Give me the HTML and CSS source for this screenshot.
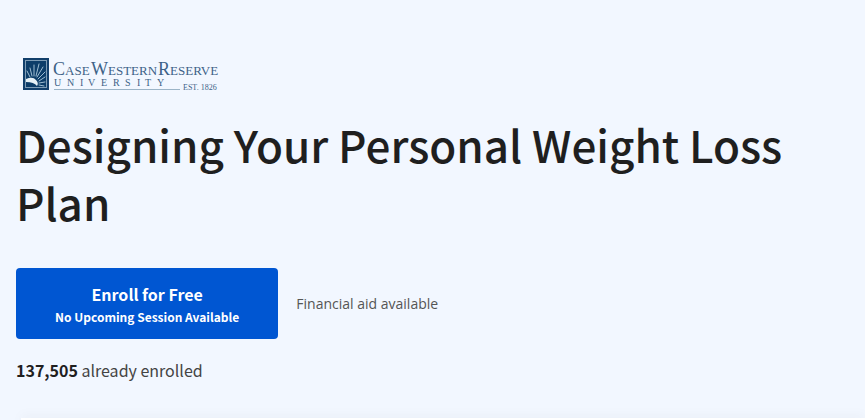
FILE: index.html
```html
<!DOCTYPE html>
<html lang="en">
<head>
<meta charset="utf-8">
<meta name="viewport" content="width=device-width, initial-scale=1">
<title>Designing Your Personal Weight Loss Plan</title>
<link rel="stylesheet" href="styles.css">
</head>
<body>
<main class="banner">
  <svg class="logo" width="200" height="36" viewBox="0 0 200 36" role="img" aria-label="Case Western Reserve University, est. 1826">
    <rect x="1" y="2" width="26" height="32" fill="#123f6b"/>
    <rect x="3.5" y="4.5" width="21" height="27" fill="#0d3d69" stroke="#7f9db6" stroke-width="1"/>
    <g stroke="#9fbdd2" stroke-width="1" stroke-linecap="round">
      <path d="M8 21L5 15M10 20L8 12M12 20L12 9M14 20L17 8M15 21L21 11M16 23L23 16M17 25L23 21M17 27L23 26M17 29L22 30"/>
    </g>
    <path d="M4 23Q11 20 14 24Q17 27 15 30Q12 26 4 26Z" fill="#e7f1f6"/>
    <g class="logo-text">
      <text x="31" y="19"><tspan class="logo-cap">C</tspan><tspan class="logo-small">ASE</tspan></text>
      <text x="69" y="19"><tspan class="logo-cap">W</tspan><tspan class="logo-small">ESTERN</tspan></text>
      <text x="136" y="19"><tspan class="logo-cap">R</tspan><tspan class="logo-small">ESERVE</tspan></text>
      <text class="logo-university" x="32 45 58 66 79 91 103 115 123 135" y="30">UNIVERSITY</text>
      <text class="logo-date" x="161" y="34">EST. 1826</text>
    </g>
    <path d="M32 33.5H158" stroke="#9bb4c7" stroke-width="1"/>
  </svg>
  <h1 class="title">Designing Your Personal Weight Loss Plan</h1>
  <div class="actions">
    <button class="enroll" type="button">
      <span class="enroll-label">Enroll for Free</span>
      <span class="enroll-note">No Upcoming Session Available</span>
    </button>
    <span class="aid">Financial aid available</span>
  </div>
  <p class="count"><strong>137,505</strong> already enrolled</p>
</main>
<section class="card" aria-label="Course details"></section>
</body>
</html>
```
FILE: styles.css
```css
* {
  box-sizing: border-box;
}

html,
body {
  height: 100%;
}

body {
  display: flex;
  flex-direction: column;
  margin: 0;
  background: #f2f7ff;
  color: #1f1f1f;
  font-family: "Noto Sans CJK SC", "Noto Sans", sans-serif;
}

.banner {
  padding: 56px 16px 0;
}

.logo {
  display: block;
  margin-left: 6px;
}

.logo-text {
  fill: #3d6287;
  font-family: "Liberation Serif", serif;
}

.logo-cap {
  font-size: 18px;
}

.logo-small {
  font-size: 13px;
}

.logo-university {
  font-size: 10px;
}

.logo-date {
  font-size: 8px;
}

.title {
  margin: 23px 0 37px;
  font-size: 44px;
  font-weight: 500;
  line-height: 58px;
}

.actions {
  display: flex;
  align-items: center;
  gap: 18px;
}

.enroll {
  display: flex;
  flex-direction: column;
  align-items: center;
  padding: 14px 39px 12px;
  border: 0;
  border-radius: 4px;
  background: #0056d2;
  color: #fff;
  font-family: inherit;
  font-weight: 700;
}

.enroll-label {
  font-size: 16px;
  line-height: 24px;
}

.enroll-note {
  font-size: 12px;
  line-height: 21px;
}

.aid {
  color: #555;
  font-family: "Open Sans", sans-serif;
  font-size: 14px;
}

.count {
  margin: 19px 0 36px;
  color: #444;
  font-size: 16px;
  line-height: 24px;
}

.count strong {
  color: #1f1f1f;
}

.card {
  flex: 1;
  margin-left: 21px;
  background: #fff;
  box-shadow: 0 0 12px rgba(0, 0, 0, 0.15);
}
```
